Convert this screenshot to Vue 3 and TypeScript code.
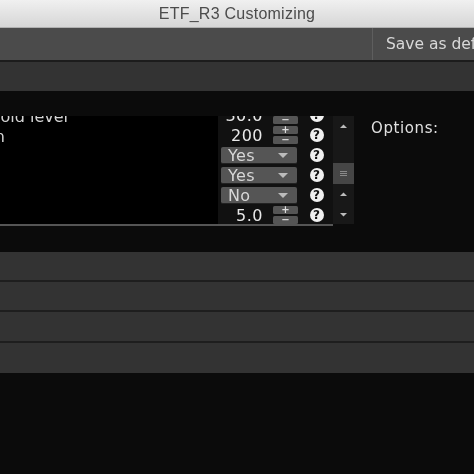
<script setup lang="ts">
type Row = { label: string; labelEnd: number; kind: 'num' | 'sel'; value: string }
const rows: Row[] = [
  { label: 'Threshold level', labelEnd: 68, kind: 'num', value: '30.0' },
  { label: 'Option', labelEnd: 5, kind: 'num', value: '200' },
  { label: '', labelEnd: 0, kind: 'sel', value: 'Yes' },
  { label: '', labelEnd: 0, kind: 'sel', value: 'Yes' },
  { label: '', labelEnd: 0, kind: 'sel', value: 'No' },
  { label: '', labelEnd: 0, kind: 'num', value: '5.0' },
]
const sections = [1, 2, 3, 4]
</script>

<template>
  <div class="window">
    <header class="title">ETF_R3 Customizing</header>
    <div class="toolbar">
      <div class="tool-fill"></div>
      <div class="tool-btn">Save as default</div>
    </div>
    <div class="section-top"></div>
    <main class="content">
      <div class="panel">
        <div class="table">
          <div class="rows">
            <div class="rows-inner">
              <div v-for="(r, i) in rows" :key="i" class="row">
                <div class="label-cell">
                  <div class="label" :style="{ width: r.labelEnd + 'px' }">
                    <span>{{ r.label }}</span>
                  </div>
                </div>
                <div class="control">
                  <template v-if="r.kind === 'num'">
                    <span class="num">{{ r.value }}</span>
                    <span class="spin">
                      <span class="spin-btn">+</span>
                      <span class="spin-btn">−</span>
                    </span>
                  </template>
                  <div v-else class="select">
                    <span>{{ r.value }}</span>
                    <i class="caret"></i>
                  </div>
                </div>
                <div class="help"><span class="help-dot">?</span></div>
              </div>
            </div>
          </div>
          <div class="scrollbar">
            <svg class="arrow first" viewBox="0 0 21 25"><path d="M7 12 L10.500 8.500 L14 12 Z" /></svg>
            <div class="spacer"></div>
            <div class="thumb"><b></b><b></b><b></b></div>
            <svg class="arrow" viewBox="0 0 21 20"><path d="M7 12 L10.500 8.500 L14 12 Z" /></svg>
            <svg class="arrow" viewBox="0 0 21 20"><path d="M7 9 L10.500 12.500 L14 9 Z" /></svg>
          </div>
        </div>
        <div class="options">Options:</div>
      </div>
      <div class="rule"></div>
    </main>
    <section v-for="s in sections" :key="s" class="bar"></section>
    <div class="bottom"></div>
  </div>
</template>

<style>
html, body { margin: 0; background: #0b0b0b; }
</style>

<style scoped>
.window {
  width: 474px;
  height: 474px;
  overflow: hidden;
  display: flex;
  flex-direction: column;
  background: #0b0b0b;
  font-family: "DejaVu Sans", sans-serif;
  filter: blur(0.5px);
}
.title {
  height: 27px;
  flex: none;
  display: flex;
  align-items: center;
  justify-content: center;
  background: linear-gradient(#f0f0f0, #d6d6d6);
  border-bottom: 1px solid #b0b0b0;
  color: #4c4c4c;
  font: 16px "Liberation Sans", sans-serif;
  letter-spacing: 0.25px;
}
.toolbar {
  height: 32px;
  flex: none;
  display: flex;
  background: #4b4b4b;
  border-bottom: 2px solid #1c1c1c;
}
.tool-fill { width: 372px; flex: none; border-right: 1px solid #5e5e5e; }
.tool-btn {
  flex: none;
  padding-left: 13px;
  white-space: nowrap;
  line-height: 32px;
  color: #d8d8d8;
  font-size: 15.500px;
}
.section-top { height: 29px; flex: none; background: #333; }
.content {
  height: 161px;
  flex: none;
  display: flex;
  flex-direction: column;
  padding-top: 25px;
  box-sizing: border-box;
}
.panel { display: flex; height: 108px; flex: none; }
.table { width: 354px; flex: none; display: flex; overflow: hidden; }
.rows { width: 333px; flex: none; height: 108px; overflow: hidden; background: #000; }
.rows-inner { margin-top: -11px; }
.row {
  height: 20px;
  display: flex;
}
.label-cell { width: 218px; flex: none; }
.label {
  display: flex;
  justify-content: flex-end;
  overflow: hidden;
  height: 20px;
  padding-top: 2px;
  font-size: 16px;
  line-height: 20px;
  white-space: nowrap;
  color: #d4d4d4;
}
.label span { flex: none; }
.control {
  width: 80px;
  flex: none;
  background: #111;
  display: flex;
  align-items: center;
  box-sizing: border-box;
  padding-left: 3px;
}
.num {
  width: 42px;
  margin-right: 10px;
  text-align: right;
  flex: none;
  font-size: 16px;
  letter-spacing: 0.5px;
  color: #e8e8e8;
}
.spin {
  display: flex;
  flex-direction: column;
  gap: 2px;
}
.spin-btn {
  width: 25px;
  height: 8px;
  background: #555;
  border-radius: 1.500px;
  color: #ddd;
  font: bold 10px/8px "DejaVu Sans", sans-serif;
  text-align: center;
}
.select {
  width: 76px;
  height: 17px;
  margin-top: 1px;
  background: #555;
  border-radius: 2px;
  border-bottom: 1px solid #222;
  display: flex;
  align-items: center;
  justify-content: space-between;
  padding: 0 9px 0 7px;
  box-sizing: border-box;
  font-size: 16px;
  letter-spacing: 0.4px;
  color: #d8d8d8;
}
.caret {
  width: 0;
  height: 0;
  border-left: 5px solid transparent;
  border-right: 5px solid transparent;
  border-top: 5px solid #bbb;
}
.help {
  width: 35px;
  flex: none;
  background: #111;
  display: flex;
  align-items: center;
  justify-content: center;
  padding-left: 2px;
  box-sizing: border-box;
}
.help-dot {
  width: 14px;
  height: 14px;
  border-radius: 50%;
  background: #f0f0f0;
  color: #111;
  font: bold 12px/14px "DejaVu Sans", sans-serif;
  text-align: center;
}
.scrollbar {
  width: 21px;
  flex: none;
  background: #181818;
  display: flex;
  flex-direction: column;
}
.arrow { width: 21px; height: 20px; flex: none; display: block; fill: #bbb; }
.arrow.first { height: 25px; }
.spacer { flex: 1; }
.thumb {
  height: 21px;
  flex: none;
  background: #464646;
  display: flex;
  flex-direction: column;
  align-items: center;
  justify-content: center;
  gap: 1px;
}
.thumb b { width: 7px; height: 1px; background: #8a8a8a; }
.options {
  padding: 3px 0 0 17px;
  color: #e0e0e0;
  font-size: 15px;
  letter-spacing: 0.6px;
  white-space: nowrap;
}
.rule { width: 333px; height: 2px; flex: none; background: #555; }
.bar {
  height: 30.200px;
  flex: none;
  background: #333;
  border-bottom: 2px solid #1e1e1e;
  box-sizing: border-box;
}
.bar:last-of-type { border-bottom: 0; }
.bottom { flex: 1; }
</style>
